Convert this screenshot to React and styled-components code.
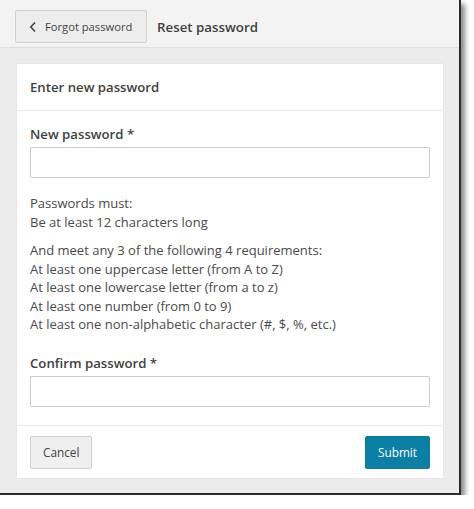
import styled, { createGlobalStyle } from 'styled-components';

const GlobalStyle = createGlobalStyle`
  html, body {
    margin: 0;
    padding: 0;
    background: #ffffff;
  }

  body {
    font-family: "Open Sans", "Liberation Sans", sans-serif;
    color: #444444;
  }

  * {
    box-sizing: border-box;
  }
`;

const Window = styled.div`
  width: 461px;
  height: 495px;
  background: #ececec;
  border-right: 2px solid #2b2b2b;
  border-bottom: 2px solid #2b2b2b;
  box-shadow: 4px 4px 5px rgba(0, 0, 0, 0.45);
  display: flex;
  flex-direction: column;
`;

const Header = styled.div`
  height: 48px;
  background: #f3f3f3;
  border-bottom: 1px solid #dedede;
  display: flex;
  align-items: center;
  padding-left: 15px;
  gap: 10px;
`;

const BackButton = styled.button`
  display: flex;
  align-items: center;
  gap: 8px;
  height: 33px;
  width: 132px;
  padding: 0 0 0 13px;
  margin-top: 6px;
  background: #ededed;
  border: 1px solid #cfcfcf;
  border-radius: 2px;
  font-family: inherit;
  font-size: 11.2px;
  color: #444444;
`;

const Title = styled.h1`
  margin: 6px 0 0;
  font-size: 13.3px;
  font-weight: 600;
  color: #3f3f3f;
`;

const Card = styled.div`
  margin: 15px 15px 0 16px;
  background: #ffffff;
  border: 1px solid #e6e6e6;
  display: flex;
  flex-direction: column;
`;

const CardHeader = styled.div`
  height: 47px;
  display: flex;
  align-items: center;
  padding: 0 13px;
  border-bottom: 1px solid #e8e8e8;
  font-size: 13.2px;
  font-weight: 600;
  color: #3f3f3f;
`;

const CardBody = styled.div`
  padding: 13px 13px 18px;
  display: flex;
  flex-direction: column;
`;

const Label = styled.label`
  font-size: 13.2px;
  font-weight: 600;
  line-height: 20px;
  color: #3f3f3f;
  margin-top: ${(p) => (p.$first ? '0' : '19px')};
  margin-bottom: 3px;
`;

const Input = styled.input`
  height: 31px;
  width: 100%;
  border: 1px solid #cccccc;
  border-radius: 1px;
  background: #ffffff;
`;

const Rules = styled.p`
  margin: ${(p) => (p.$first ? '16px 0 0' : '10px 0 0')};
  font-size: 13px;
  line-height: 18.5px;
  color: #4a4a4a;
`;

const Footer = styled.div`
  border-top: 1px solid #e8e8e8;
  padding: 10px 13px 9px;
  display: flex;
  justify-content: space-between;
`;

const Button = styled.button`
  height: 33px;
  padding: 0 12px;
  border-radius: 2px;
  font-family: inherit;
  font-size: 11.8px;
  border: 1px solid ${(p) => (p.$primary ? '#0b7aa0' : '#cfcfcf')};
  background: ${(p) => (p.$primary ? '#0b7fa6' : '#efefef')};
  color: ${(p) => (p.$primary ? '#ffffff' : '#444444')};
`;

function ChevronLeft() {
  return (
    <svg width="8" height="12" viewBox="0 0 8 12">
      <polyline points="6,1.5 1.8,6 6,10.5" fill="none" stroke="#444" strokeWidth="1.6" />
    </svg>
  );
}

export default function App() {
  return (
    <>
      <GlobalStyle />
      <Window>
        <Header>
          <BackButton type="button">
            <ChevronLeft />
            Forgot password
          </BackButton>
          <Title>Reset password</Title>
        </Header>
        <Card>
          <CardHeader>Enter new password</CardHeader>
          <CardBody>
            <Label $first>New password *</Label>
            <Input type="password" />
            <Rules $first>
              Passwords must:
              <br />
              Be at least 12 characters long
            </Rules>
            <Rules>
              And meet any 3 of the following 4 requirements:
              <br />
              At least one uppercase letter (from A to Z)
              <br />
              At least one lowercase letter (from a to z)
              <br />
              At least one number (from 0 to 9)
              <br />
              At least one non-alphabetic character (#, $, %, etc.)
            </Rules>
            <Label>Confirm password *</Label>
            <Input type="password" />
          </CardBody>
          <Footer>
            <Button type="button">Cancel</Button>
            <Button type="button" $primary>Submit</Button>
          </Footer>
        </Card>
      </Window>
    </>
  );
}
